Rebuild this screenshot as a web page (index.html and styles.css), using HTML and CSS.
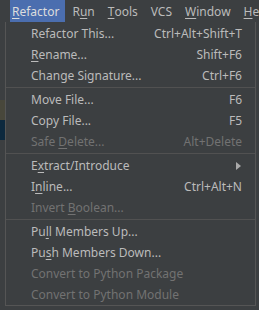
FILE: index.html
```html
<!DOCTYPE html>
<html lang="en">
<head>
  <meta charset="UTF-8">
  <title>refactor menu</title>
  <link rel="stylesheet" href="styles.css">
</head>
<body>
<div class="menubar">
  <span class="mitem active"><u>R</u>efactor</span>
  <span class="mitem">R<u>u</u>n</span>
  <span class="mitem"><u>T</u>ools</span>
  <span class="mitem">VCS</span>
  <span class="mitem"><u>W</u>indow</span>
  <span class="mitem"><u>H</u>elp</span>
</div>
<div class="editor">
  <div class="strip s1"></div>
  <div class="strip s2"></div>
  <div class="strip s3"></div>
</div>
<div class="popup">
  <div class="row"><span>Refactor This...</span><span class="key">Ctrl+Alt+Shift+T</span></div>
  <div class="row"><span><u>R</u>ename...</span><span class="key">Shift+F6</span></div>
  <div class="row"><span>Change Signature...</span><span class="key">Ctrl+F6</span></div>
  <div class="sep"></div>
  <div class="row"><span>Move File...</span><span class="key">F6</span></div>
  <div class="row"><span>Copy File...</span><span class="key">F5</span></div>
  <div class="row off"><span>Safe <u>D</u>elete...</span><span class="key">Alt+Delete</span></div>
  <div class="sep"></div>
  <div class="row"><span>E<u>x</u>tract/Introduce</span><span class="arrow"></span></div>
  <div class="row"><span>I<u>n</u>line...</span><span class="key">Ctrl+Alt+N</span></div>
  <div class="row off"><span>Invert <u>B</u>oolean...</span></div>
  <div class="sep"></div>
  <div class="row"><span>Pu<u>l</u>l Members Up...</span></div>
  <div class="row"><span>Pu<u>s</u>h Members Down...</span></div>
  <div class="row off"><span>Convert to Python Package</span></div>
  <div class="row off"><span>Convert to Python Module</span></div>
</div>
</body>
</html>
```

FILE: styles.css
```css
body {
  margin: 0;
  width: 259px;
  height: 310px;
  overflow: hidden;
  background: #2b2b2b;
  font-family: "Noto Sans", "Liberation Sans", sans-serif;
  font-size: 12px;
  color: #bbbbbb;
  position: relative;
}

u {
  text-decoration: underline;
  text-underline-offset: 2px;
}

.menubar {
  height: 22px;
  width: 259px;
  overflow: hidden;
  background: #3c3f41;
  display: flex;
  align-items: stretch;
  padding-left: 10px;
  box-sizing: border-box;
  white-space: nowrap;
}

.mitem {
  display: flex;
  align-items: center;
  padding: 0 6px 0 2px;
  margin-right: 5px;
}

.mitem.active {
  background: #4b6eaf;
  color: #dddddd;
}

.editor {
  height: 288px;
  background: #3c3f41;
  display: flex;
  flex-direction: column;
}

.strip {
  width: 5px;
}

.s1 {
  height: 78px;
}

.s2 {
  height: 20px;
  background: #48473b;
}

.s3 {
  height: 20px;
  background: #0d293e;
}

.popup {
  position: absolute;
  left: 5px;
  top: 22px;
  width: 251px;
  height: 284px;
  background: #3c3f41;
  border: 1px solid #555555;
  border-top: none;
  box-sizing: border-box;
  padding-top: 1px;
}

.row {
  height: 21px;
  display: flex;
  align-items: center;
  justify-content: space-between;
  padding: 0 13px 0 25px;
  white-space: nowrap;
}

.row.off {
  color: #727272;
}

.key {
  text-align: right;
}

.arrow {
  width: 0;
  height: 0;
  border-left: 5px solid #aaaaaa;
  border-top: 4px solid transparent;
  border-bottom: 4px solid transparent;
  margin-right: 1px;
}

.sep {
  height: 1px;
  background: #515151;
  margin: 1px 0;
}
```
